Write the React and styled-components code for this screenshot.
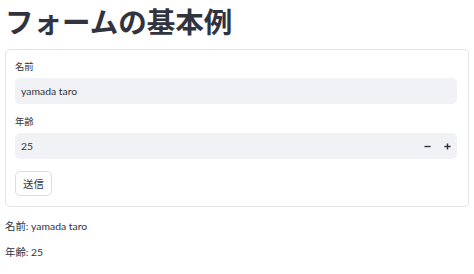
import React from "react";
import styled, { createGlobalStyle } from "styled-components";

const Global = createGlobalStyle`
  html, body { margin: 0; padding: 0; background: #ffffff; }
  body {
    font-family: "Source Sans Pro", Lato, "Noto Sans CJK JP", sans-serif;
    color: #31333f;
    -webkit-font-smoothing: antialiased;
  }
  * { box-sizing: border-box; }
`;

const Page = styled.main`
  padding: 4px 5px 0 5px;
  display: flex;
  flex-direction: column;
`;

const Title = styled.h1`
  margin: 0 0 11px 0;
  font-family: "Noto Sans CJK JP", sans-serif;
  font-weight: 700;
  font-size: 28.5px;
  line-height: 34px;
  color: #31333f;
  letter-spacing: 0;
`;

const Form = styled.form`
  border: 1px solid #e2e3e7;
  border-radius: 5px;
  padding: 10px 11px 10px 9px;
  display: flex;
  flex-direction: column;
  gap: 11px;
  margin-bottom: 11px;
`;

const Field = styled.div`
  display: flex;
  flex-direction: column;
  gap: 4px;
`;

const Label = styled.label`
  font-size: 9.3px;
  line-height: 14px;
  color: #31333f;
  font-family: "Source Sans Pro", Lato, "Noto Sans CJK JP", sans-serif;
`;

const InputBox = styled.div`
  height: 26px;
  background: #f0f2f6;
  border-radius: 5px;
  display: flex;
  align-items: center;
`;

const TextInput = styled.input`
  flex: 1;
  min-width: 0;
  height: 100%;
  border: none;
  background: transparent;
  outline: none;
  padding: 0 6px;
  font-family: Lato, "Noto Sans CJK JP", sans-serif;
  font-size: 10.4px;
  color: #31333f;
`;

const StepButton = styled.button`
  width: 20px;
  height: 100%;
  border: none;
  background: transparent;
  padding: 0;
  display: flex;
  align-items: center;
  justify-content: center;
  color: #31333f;
  cursor: pointer;
`;

const SubmitRow = styled.div`
  display: flex;
  margin-top: 1px;
`;

const Submit = styled.button`
  height: 25px;
  padding: 0 7px;
  background: #ffffff;
  border: 1px solid #dcdde1;
  border-radius: 5px;
  font-family: "Noto Sans CJK JP", sans-serif;
  font-size: 10.4px;
  color: #31333f;
  cursor: pointer;
`;

const Output = styled.p`
  margin: 0 0 10px 0;
  font-size: 10.4px;
  line-height: 16px;
  color: #31333f;
`;

const Minus = () => (
  <svg width="7" height="7" viewBox="0 0 8 8">
    <path d="M0.5 4H7.5" stroke="#31333f" strokeWidth="1.6" />
  </svg>
);

const Plus = () => (
  <svg width="7" height="7" viewBox="0 0 8 8">
    <path d="M0.5 4H7.5M4 0.5V7.5" stroke="#31333f" strokeWidth="1.6" />
  </svg>
);

export default function App() {
  return (
    <>
      <Global />
      <Page>
        <Title>フォームの基本例</Title>
        <Form onSubmit={(e) => e.preventDefault()}>
          <Field>
            <Label>名前</Label>
            <InputBox>
              <TextInput defaultValue="yamada taro" />
            </InputBox>
          </Field>
          <Field>
            <Label>年齢</Label>
            <InputBox>
              <TextInput defaultValue="25" />
              <StepButton type="button"><Minus /></StepButton>
              <StepButton type="button"><Plus /></StepButton>
            </InputBox>
          </Field>
          <SubmitRow>
            <Submit type="submit">送信</Submit>
          </SubmitRow>
        </Form>
        <Output>名前: yamada taro</Output>
        <Output>年齢: 25</Output>
      </Page>
    </>
  );
}
